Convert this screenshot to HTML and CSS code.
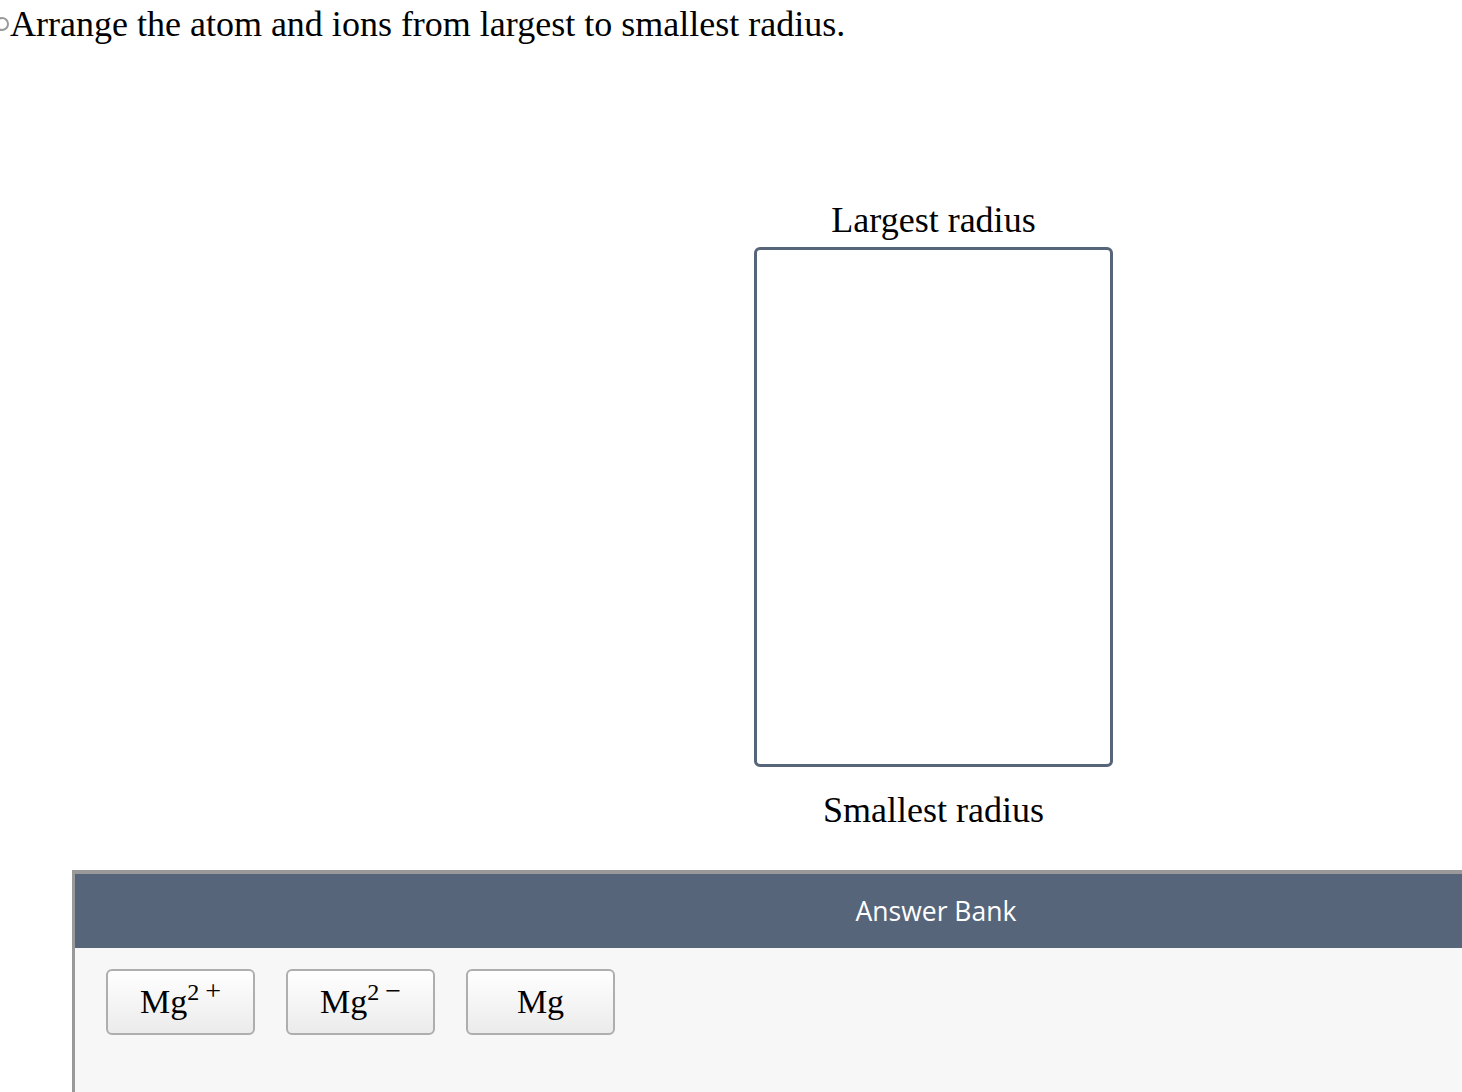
FILE: index.html
```html
<!DOCTYPE html>
<html lang="en">
<head>
<meta charset="utf-8">
<title>Arrange the atom and ions</title>
<link rel="stylesheet" href="styles.css">
</head>
<body>
  <div class="question">
    <span class="marker"></span>
    <p class="prompt">Arrange the atom and ions from largest to smallest radius.</p>
  </div>

  <div class="sorter">
    <div class="rank-label">Largest radius</div>
    <div class="dropzone"></div>
    <div class="rank-label rank-label--bottom">Smallest radius</div>
  </div>

  <section class="bank">
    <header class="bank-head">Answer Bank</header>
    <div class="bank-body">
      <div class="tile">Mg<sup>2 <span class="sign">+</span></sup></div>
      <div class="tile">Mg<sup>2 <span class="sign">&minus;</span></sup></div>
      <div class="tile">Mg</div>
    </div>
  </section>
</body>
</html>
```

FILE: styles.css
```css
html, body {
  margin: 0;
  padding: 0;
  overflow: hidden;
  background: #ffffff;
}

body {
  width: 1462px;
  height: 1092px;
  font-family: "Liberation Serif", "Times New Roman", serif;
  color: #000;
}

.question {
  display: flex;
  align-items: flex-start;
  height: 50px;
}

.marker {
  width: 10px;
  height: 10px;
  margin-left: -5px;
  margin-top: 17px;
  border: 2px solid #9a9a9a;
  border-radius: 50%;
  flex: none;
}

.prompt {
  margin: 0 0 0 1px;
  padding-top: 4px;
  font-size: 36px;
  line-height: 40px;
}

.sorter {
  width: 359px;
  margin-left: 754px;
  margin-top: 150px;
  display: flex;
  flex-direction: column;
  align-items: center;
}

.rank-label {
  font-size: 36px;
  line-height: 40px;
  height: 40px;
  margin-bottom: 7px;
}

.rank-label--bottom {
  margin-top: 23px;
  margin-bottom: 0;
}

.dropzone {
  box-sizing: border-box;
  width: 359px;
  height: 520px;
  border: 3px solid #56657a;
  border-radius: 6px;
  background: #fff;
}

.bank {
  margin-top: 40px;
  margin-left: 72px;
  width: 1722px;
  border-top: 4px solid #999999;
  border-left: 3px solid #999999;
  background: #f7f7f7;
  height: 300px;
}

.bank-head {
  height: 74px;
  background: #56657a;
  color: #ffffff;
  font-family: "Open Sans", "Liberation Sans", sans-serif;
  font-size: 26.5px;
  line-height: 74px;
  text-align: center;
}

.bank-body {
  display: flex;
  gap: 31px;
  padding: 21px 0 0 31px;
}

.tile {
  box-sizing: border-box;
  width: 149px;
  height: 66px;
  border: 2px solid #aeaeae;
  border-radius: 6px;
  background: linear-gradient(#ffffff, #ebebeb);
  font-size: 34px;
  line-height: 62px;
  text-align: center;
}

.tile sup {
  font-size: 24px;
  line-height: 0;
  vertical-align: 0;
  position: relative;
  top: -13px;
}

.tile .sign {
  font-size: 28px;
}
```
